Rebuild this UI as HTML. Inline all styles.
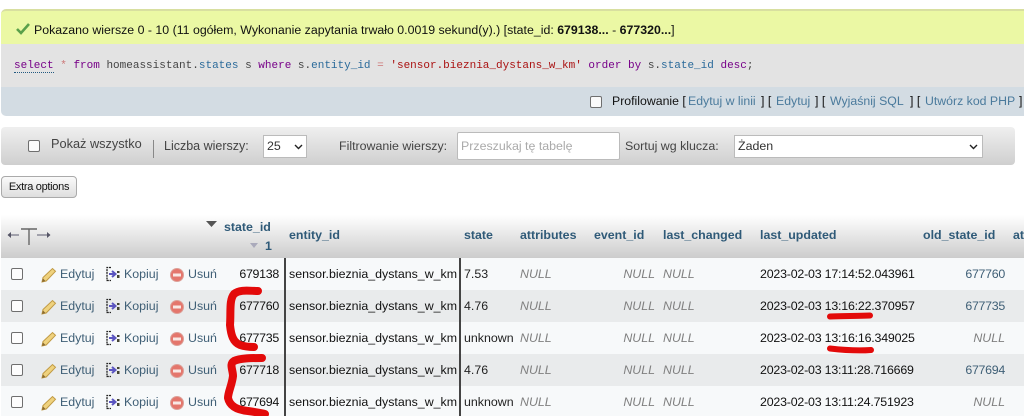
<!DOCTYPE html>
<html><head><meta charset="utf-8">
<style>
html,body{margin:0;padding:0;background:#fff}
body{width:1024px;height:416px;overflow:hidden;position:relative;font:12.4px/16px "Liberation Sans",Arial,sans-serif;color:#111}
.a,.r span,.r svg,.r i{position:absolute;white-space:nowrap}
.r{position:absolute;left:1px;width:1023px;height:32px;background:#f7f9fa}
.r.e{background:#e9ebec}
.r span{top:8px}
.r .l{color:#3f5f76}
.r .n{color:#808080;font-style:italic}
.r .g{color:#222}
.r .d{color:#111}
.r .t{letter-spacing:-.2px}
.r .v{letter-spacing:-.28px}
.r i{left:10px;top:10px;width:10px;height:10px;border:1.5px solid #6f6f6f;border-radius:2px;background:#fdfdfd}
.r .rt{text-align:right}
.h{position:absolute;font-weight:bold;color:#2f5a78;white-space:nowrap;top:227px}
.cb{position:absolute;width:10px;height:10px;border:1.5px solid #6f6f6f;border-radius:2px;background:#fafafa}
.s{position:absolute;background:#fff;border:1px solid #bbb;box-sizing:border-box;color:#333;padding:0 3px;white-space:nowrap}
.sql{font:11px/16px "Liberation Mono",monospace;letter-spacing:0}
.q{position:absolute;top:93px;font-size:12.3px;white-space:nowrap;color:#111}
.q.k{color:#4a7a9c}
</style></head><body>
<svg width="0" height="0" style="position:absolute">
<symbol id="p" viewBox="0 0 16 16"><path d="M1 15l1-4.500L11.500 1.500l3 2.800L5.200 14z" fill="#efd27e" stroke="#c09a44" stroke-width="1"/><path d="M1 15l1-3.500 2.500 2.500z" fill="#8a6a30"/></symbol>
<symbol id="c" viewBox="0 0 14 16"><path d="M5 1.500H1v13h4" fill="none" stroke="#222" stroke-width="1.300" stroke-dasharray="2 .8"/><path d="M3 8h6M6 5l3.500 3L6 11" fill="none" stroke="#5b55c0" stroke-width="2"/><path d="M11 5h2.500v2H11zM11 9h2.500v3H11z" fill="#443"/></symbol>
<symbol id="x" viewBox="0 0 14 14"><circle cx="7" cy="7" r="6.500" fill="#e4766c" stroke="#dca098"/><rect x="3" y="5.500" width="8" height="3" fill="#f8e8e4"/></symbol>
</svg>

<div class="a" style="left:1px;top:9px;width:1023px;height:35px;background:#ebf8a4;border-top:2px solid #d8dfa0;box-sizing:border-box;border-radius:5px 0 0 0"></div>
<svg class="a" style="left:16px;top:23px" width="14" height="12" viewBox="0 0 14 12"><path d="M1 6l4 4 8-9" fill="none" stroke="#5aa04a" stroke-width="2.600"/></svg>
<div class="a" style="left:34px;top:22px;color:#111;font-size:12.35px">Pokazano wiersze 0 - 10 (11 ogółem, Wykonanie zapytania trwało 0.0019 sekund(y).) [state_id: <b>679138...</b> - <b>677320...</b>]</div>

<div class="a" style="left:1px;top:44px;width:1023px;height:43px;background:#e3e3e3"></div>
<div class="a sql" style="left:14px;top:58px;color:#444"><span style="color:#708;border-bottom:1px dotted #235a81">select</span> <span style="color:#c77">*</span> <span style="color:#708">from</span> homeassistant.<span style="color:#2a6a9a">states</span> s <span style="color:#708">where</span> s.<span style="color:#2a6a9a">entity_id</span> <span style="color:#c77">=</span> <span style="color:#a11">'sensor.bieznia_dystans_w_km'</span> <span style="color:#708">order by</span> s.<span style="color:#2a6a9a">state_id</span> <span style="color:#708">desc</span>;</div>

<div class="a" style="left:1px;top:87px;width:1023px;height:29px;background:#d3dce3;border-radius:0 0 0 5px"></div>
<div class="cb" style="left:590px;top:96px"></div>
<div class="q" style="left:612px">Profilowanie [</div>
<div class="q k" style="left:688px">Edytuj w linii</div>
<div class="q" style="left:761px">] [</div>
<div class="q k" style="left:776px">Edytuj</div>
<div class="q" style="left:815px">] [</div>
<div class="q k" style="left:830px">Wyjaśnij SQL</div>
<div class="q" style="left:910px">] [</div>
<div class="q k" style="left:925px">Utwórz kod PHP</div>
<div class="q" style="left:1019px">]</div>

<div class="a" style="left:1px;top:127px;width:1014px;height:38px;background:linear-gradient(#efefef,#cfcfcf);border-radius:4px"></div>
<div class="cb" style="left:28px;top:140px"></div>
<div class="a" style="left:51px;top:136px;color:#444;font-size:12.75px">Pokaż wszystko</div>
<div class="a" style="left:153px;top:140px;width:1px;height:18px;background:#888"></div>
<div class="a" style="left:164px;top:138px;color:#444;font-size:12.5px">Liczba wierszy:</div>
<div class="s" style="left:263px;top:135px;width:44px;height:23px;line-height:21px">25</div>
<svg class="a" style="left:294px;top:144px" width="9" height="6" viewBox="0 0 9 6"><path d="M1 1l3.500 3.500L8 1" fill="none" stroke="#222" stroke-width="1.400"/></svg>
<div class="a" style="left:339px;top:138px;color:#444">Filtrowanie wierszy:</div>
<div class="s" style="left:457px;top:132px;width:163px;height:28px;line-height:26px;color:#aaa;border-radius:2px">Przeszukaj tę tabelę</div>
<div class="a" style="left:625px;top:138px;color:#444">Sortuj wg klucza:</div>
<div class="s" style="left:734px;top:135px;width:249px;height:23px;line-height:21px">Żaden</div>
<svg class="a" style="left:969px;top:144px" width="9" height="6" viewBox="0 0 9 6"><path d="M1 1l3.500 3.500L8 1" fill="none" stroke="#222" stroke-width="1.400"/></svg>

<div class="a" style="left:1px;top:176px;width:76px;height:22px;box-sizing:border-box;border:1px solid #aaa;border-radius:4px;background:linear-gradient(#fafafa,#dedede);font-size:11px;line-height:20px;text-align:center;color:#111;letter-spacing:-.3px">Extra options</div>

<div class="a" style="left:1px;top:215px;width:1023px;height:43px;background:linear-gradient(#fff,#ccc)"></div>
<svg class="a" style="left:6px;top:226px" width="46" height="20" viewBox="0 0 46 20"><path d="M15 3h16M23 3v16" stroke="#666" stroke-width="1.400" fill="none"/><path d="M2 9h11M31 9h13" stroke="#778" stroke-width="1.200"/><path d="M5 6L1.500 9 5 12zM41 6l3.500 3-3.500 3z" fill="#556"/></svg>
<svg class="a" style="left:206px;top:221px" width="11" height="6"><path d="M0 0h11L5.500 6z" fill="#555"/></svg>
<div class="h" style="left:224px;top:219px">state_id</div>
<svg class="a" style="left:250px;top:243px" width="8" height="5"><path d="M0 0h8L4 5z" fill="#aab"/></svg>
<div class="h" style="left:265px;top:238px">1</div>
<div class="h" style="left:289px">entity_id</div>
<div class="h" style="left:464px">state</div>
<div class="h" style="left:520px">attributes</div>
<div class="h" style="left:594px">event_id</div>
<div class="h" style="left:663px">last_changed</div>
<div class="h" style="left:760px">last_updated</div>
<div class="h" style="left:923px">old_state_id</div>
<div class="h" style="left:1013px">at</div>

<div class="r" style="top:258px"><i></i><svg style="left:40px;top:9px" width="16" height="16"><use href="#p"/></svg><span class="l" style="left:59px">Edytuj</span><svg style="left:105px;top:8px" width="14" height="16"><use href="#c"/></svg><span class="l" style="left:123px">Kopiuj</span><svg style="left:169px;top:10px" width="14" height="14"><use href="#x"/></svg><span class="l" style="left:187px">Usuń</span><span class="d rt v" style="left:219px;width:59px">679138</span><span class="d" style="left:288px">sensor.bieznia_dystans_w_km</span><span class="g" style="left:463px">7.53</span><span class="n" style="left:519px">NULL</span><span class="n rt" style="left:594px;width:60px">NULL</span><span class="n" style="left:662px">NULL</span><span class="d t" style="left:759px">2023-02-03 17:14:52.043961</span><span class="l rt v" style="left:944px;width:60px">677760</span></div>

<div class="r e" style="top:290px"><i></i><svg style="left:40px;top:9px" width="16" height="16"><use href="#p"/></svg><span class="l" style="left:59px">Edytuj</span><svg style="left:105px;top:8px" width="14" height="16"><use href="#c"/></svg><span class="l" style="left:123px">Kopiuj</span><svg style="left:169px;top:10px" width="14" height="14"><use href="#x"/></svg><span class="l" style="left:187px">Usuń</span><span class="d rt v" style="left:219px;width:59px">677760</span><span class="d" style="left:288px">sensor.bieznia_dystans_w_km</span><span class="g" style="left:463px">4.76</span><span class="n" style="left:519px">NULL</span><span class="n rt" style="left:594px;width:60px">NULL</span><span class="n" style="left:662px">NULL</span><span class="d t" style="left:759px">2023-02-03 13:16:22.370957</span><span class="l rt v" style="left:944px;width:60px">677735</span></div>

<div class="r" style="top:322px"><i></i><svg style="left:40px;top:9px" width="16" height="16"><use href="#p"/></svg><span class="l" style="left:59px">Edytuj</span><svg style="left:105px;top:8px" width="14" height="16"><use href="#c"/></svg><span class="l" style="left:123px">Kopiuj</span><svg style="left:169px;top:10px" width="14" height="14"><use href="#x"/></svg><span class="l" style="left:187px">Usuń</span><span class="d rt v" style="left:219px;width:59px">677735</span><span class="d" style="left:288px">sensor.bieznia_dystans_w_km</span><span class="g" style="left:463px">unknown</span><span class="n" style="left:519px">NULL</span><span class="n rt" style="left:594px;width:60px">NULL</span><span class="n" style="left:662px">NULL</span><span class="d t" style="left:759px">2023-02-03 13:16:16.349025</span><span class="n rt" style="left:944px;width:60px">NULL</span></div>

<div class="r e" style="top:354px"><i></i><svg style="left:40px;top:9px" width="16" height="16"><use href="#p"/></svg><span class="l" style="left:59px">Edytuj</span><svg style="left:105px;top:8px" width="14" height="16"><use href="#c"/></svg><span class="l" style="left:123px">Kopiuj</span><svg style="left:169px;top:10px" width="14" height="14"><use href="#x"/></svg><span class="l" style="left:187px">Usuń</span><span class="d rt v" style="left:219px;width:59px">677718</span><span class="d" style="left:288px">sensor.bieznia_dystans_w_km</span><span class="g" style="left:463px">4.76</span><span class="n" style="left:519px">NULL</span><span class="n rt" style="left:594px;width:60px">NULL</span><span class="n" style="left:662px">NULL</span><span class="d t" style="left:759px">2023-02-03 13:11:28.716669</span><span class="l rt v" style="left:944px;width:60px">677694</span></div>

<div class="r" style="top:386px;height:30px"><i></i><svg style="left:40px;top:9px" width="16" height="16"><use href="#p"/></svg><span class="l" style="left:59px">Edytuj</span><svg style="left:105px;top:8px" width="14" height="16"><use href="#c"/></svg><span class="l" style="left:123px">Kopiuj</span><svg style="left:169px;top:10px" width="14" height="14"><use href="#x"/></svg><span class="l" style="left:187px">Usuń</span><span class="d rt v" style="left:219px;width:59px">677694</span><span class="d" style="left:288px">sensor.bieznia_dystans_w_km</span><span class="g" style="left:463px">unknown</span><span class="n" style="left:519px">NULL</span><span class="n rt" style="left:594px;width:60px">NULL</span><span class="n" style="left:662px">NULL</span><span class="d t" style="left:759px">2023-02-03 13:11:24.751923</span><span class="n rt" style="left:944px;width:60px">NULL</span></div>

<div class="a" style="left:284px;top:258px;width:2px;height:158px;background:#444"></div>
<div class="a" style="left:459px;top:258px;width:2px;height:158px;background:#444"></div>

<svg class="a" style="left:0;top:0" width="1024" height="416" viewBox="0 0 1024 416">
<g fill="none" stroke="#e30a0a" stroke-linecap="round" stroke-linejoin="round">
<path d="M258 291C250 291 240 289 234 294C229 300 231 312 230 325C231 335 233 342 240 345C246 347 250 347 254 347" stroke-width="8"/>
<path d="M262 358C252 358 240 358 234 361C229 364 233 370 233 376C232 385 228 392 228 398C230 407 238 410 248 411C255 412 262 413 265 414" stroke-width="8"/>
<path d="M830 316.500C843 316 858 316 870 315.500" stroke-width="6"/>
<path d="M830 348.500C843 350 858 351 871 350" stroke-width="6"/>
</g></svg>
</body></html>
